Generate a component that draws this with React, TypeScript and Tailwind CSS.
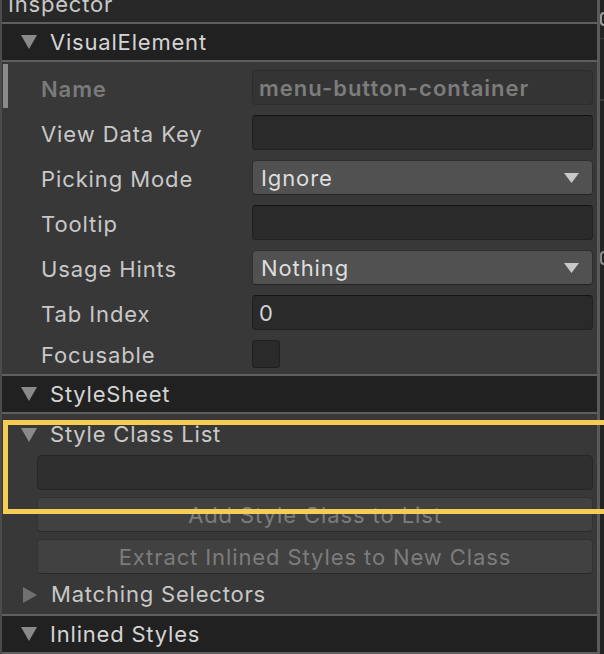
import { type ReactNode } from "react";

const FONT = { fontFamily: "Inter, 'Noto Sans', sans-serif" };

function Caret({ open = true }: { open?: boolean }) {
  return open ? (
    <svg width="16" height="14" viewBox="0 0 16 14" className="shrink-0">
      <path d="M0 0 H16 L8 14 Z" fill="#8a8a8a" />
    </svg>
  ) : (
    <svg width="14" height="16" viewBox="0 0 14 16" className="shrink-0">
      <path d="M0 0 V16 L14 8 Z" fill="#707070" />
    </svg>
  );
}

function Divider() {
  return <div className="h-[2px] bg-[#5f5f5f]" />;
}

function SectionHeader({ title }: { title: string }) {
  return (
    <div className="flex h-[36px] items-center gap-[13px] bg-[#212121] pl-[19px]">
      <Caret />
      <span className="text-[22px] tracking-[0.8px] text-[#d4d4d4]">{title}</span>
    </div>
  );
}

function Row({ label, dim, children }: { label: string; dim?: boolean; children: ReactNode }) {
  return (
    <div className="flex items-center">
      <span
        className={
          dim
            ? "w-[211px] shrink-0 pt-[2px] text-[22px] leading-[26px] font-semibold tracking-[0.9px] text-[#7a7a7a]"
            : "w-[211px] shrink-0 pt-[2px] text-[22px] leading-[26px] tracking-[0.9px] text-[#c8c8c8]"
        }
      >
        {label}
      </span>
      {children}
    </div>
  );
}

function TextField({ value }: { value?: string }) {
  return (
    <div className="flex h-[35px] flex-1 items-center rounded-[4px] border border-[#212121] border-t-[#131313] bg-[#2a2a2a] px-[6px] pt-[2px] text-[22px] tracking-[0.9px] text-[#d2d2d2]">
      {value}
    </div>
  );
}

function Dropdown({ value }: { value: string }) {
  return (
    <div className="flex h-[35px] flex-1 items-center justify-between rounded-[4px] border border-[#2f2f2f] border-b-[#232323] bg-[#515151] pl-[8px] pr-[13px] text-[22px] tracking-[0.9px] text-[#dedede]">
      <span className="pt-[2px]">{value}</span>
      <svg width="15" height="10" viewBox="0 0 15 10">
        <path d="M0 0 H15 L7.5 10 Z" fill="#c8c8c8" />
      </svg>
    </div>
  );
}

function DisabledButton({ label }: { label: string }) {
  return (
    <div className="flex h-[35px] items-center justify-center rounded-[4px] border border-[#323232] border-b-[#2a2a2a] bg-[#414141] pt-[2px] text-[22px] tracking-[0.9px] text-[#7c7c7c]">
      {label}
    </div>
  );
}

export default function App() {
  return (
    <div className="relative flex h-[654px] w-[604px] overflow-hidden bg-[#383838]" style={FONT}>
      <div className="w-[2px] shrink-0 bg-[#4c4c4c]" />

      <div className="flex min-w-0 flex-1 flex-col">
        {/* Title */}
        <div className="h-[22px] overflow-hidden bg-[#282828] pl-[6px]">
          <div className="mt-[-11px] text-[22px] leading-[30px] tracking-[0.8px] text-[#c8c8c8]">Inspector</div>
        </div>
        <Divider />

        <SectionHeader title="VisualElement" />
        <Divider />

        {/* VisualElement fields */}
        <div className="relative flex flex-col gap-[10px] pt-[8px] pb-[6px] pl-[39px] pr-[4px]">
          <div className="absolute top-[2px] left-[1px] h-[44px] w-[5px] bg-[#8a8a8a]" />
          <Row label="Name" dim>
            <div className="flex h-[35px] flex-1 items-center rounded-[4px] border border-[#2c2c2c] bg-[#343434] px-[6px] pt-[2px] text-[22px] font-semibold tracking-[1px] text-[#7c7c7c]">
              menu-button-container
            </div>
          </Row>
          <Row label="View Data Key">
            <TextField />
          </Row>
          <Row label="Picking Mode">
            <Dropdown value="Ignore" />
          </Row>
          <Row label="Tooltip">
            <TextField />
          </Row>
          <Row label="Usage Hints">
            <Dropdown value="Nothing" />
          </Row>
          <Row label="Tab Index">
            <TextField value="0" />
          </Row>
          <Row label="Focusable">
            <div className="h-[28px] w-[28px] rounded-[3px] border border-[#1f1f1f] bg-[#2a2a2a]" />
          </Row>
        </div>
        <Divider />

        <SectionHeader title="StyleSheet" />
        <Divider />

        {/* StyleSheet content */}
        <div className="flex flex-col pr-[4px]">
          <div className="flex h-[40px] items-center gap-[13px] pl-[19px] pt-[1px]">
            <Caret />
            <span className="text-[22px] tracking-[0.8px] text-[#c8c8c8]">Style Class List</span>
          </div>
          <div className="flex flex-col gap-[7px] pl-[35px] pt-[1px]">
            <div className="h-[35px] rounded-[4px] border border-[#262626] bg-[#2f2f2f]" />
            <DisabledButton label="Add Style Class to List" />
            <DisabledButton label="Extract Inlined Styles to New Class" />
          </div>
          <div className="flex h-[40px] items-center gap-[14px] pl-[21px] pt-[1px]">
            <Caret open={false} />
            <span className="text-[22px] tracking-[0.8px] text-[#c8c8c8]">Matching Selectors</span>
          </div>
        </div>
        <Divider />

        <SectionHeader title="Inlined Styles" />
        <Divider />
      </div>

      <div className="w-[3px] shrink-0 bg-[#5a5a5a]" />
      <div className="flex w-[4px] shrink-0 flex-col bg-[#232323]">
        <div className="mt-[12px] h-[14px] w-[4px] rounded-l-full border-2 border-r-0 border-[#9a9a9a]" />
        <div className="mt-[12px] h-[1px] bg-[#3a3a3a]" />
        <div className="mt-[60px] h-[2px] bg-[#3c3c3c]" />
        <div className="mt-[150px] h-[14px] w-[4px] rounded-l-full border-2 border-r-0 border-[#8a8a8a]" />
      </div>

      {/* highlight annotation */}
      <div className="absolute top-[420px] left-[3px] h-[94px] w-[610px] border-[5px] border-[#f5cd55]" />
    </div>
  );
}
